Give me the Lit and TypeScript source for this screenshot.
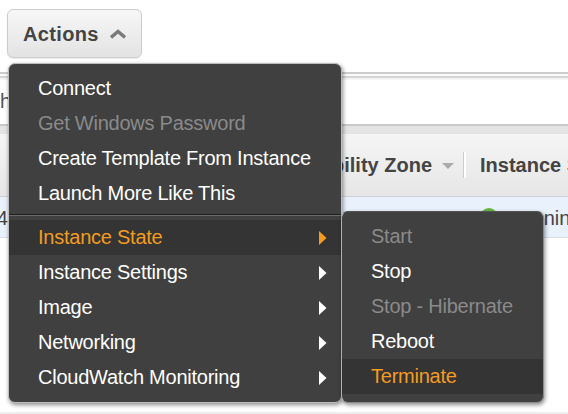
import { LitElement, html, css, svg } from "lit";
import { customElement } from "lit/decorators.js";

const main = [
  { t: "Connect" },
  { t: "Get Windows Password", d: true },
  { t: "Create Template From Instance" },
  { t: "Launch More Like This" },
];
const sub = [
  { t: "Instance State", a: true },
  { t: "Instance Settings" },
  { t: "Image" },
  { t: "Networking" },
  { t: "CloudWatch Monitoring" },
];
const state = [
  { t: "Start", d: true },
  { t: "Stop" },
  { t: "Stop - Hibernate", d: true },
  { t: "Reboot" },
  { t: "Terminate", a: true },
];

@customElement("app-root")
export class AppRoot extends LitElement {
  static styles = css`
    :host { display: block; width: 568px; height: 414px; position: relative; overflow: hidden; background: #fff;
      font-family: "Liberation Sans", Arial, sans-serif; color: #444; }
    .top { height: 72px; padding: 9px 0 0 7px; box-sizing: border-box; }
    .btn { width: 135px; height: 49px; box-sizing: border-box; border: 1px solid #ccc; border-radius: 6px;
      background: linear-gradient(#f7f7f7, #e3e3e3); display: flex; align-items: center; padding: 1px 0 0 15px; gap: 11px;
      font-weight: 700; font-size: 20px; color: #444; letter-spacing: .35px; box-shadow: 0 1px 1px rgba(0,0,0,.08); }
    .bar1 { height: 8px; background: linear-gradient(#ccc 0 2px, #fafafa 2px 4px, #d4d4d4 4px 6px, #f4f4f4 6px); }
    .search { height: 44px; background: #fff; font-size: 20px; color: #555; line-height: 42px; overflow: hidden; }
    .bar2 { height: 10px; background: linear-gradient(#c9c9c9 0 2px, #e4e4e4 2px 100%); }
    .head { height: 63px; box-sizing: border-box; background: linear-gradient(#f5f5f5, #e6e6e6); border-bottom: 1px solid #ccd0d6;
      display: flex; align-items: center; padding-left: 332px; font-weight: 700; font-size: 20px; color: #444; white-space: nowrap; overflow: hidden; }
    .sort { margin: 2px 9px 0 10px; width: 0; height: 0; border: 6px solid transparent; border-top: 6px solid #aaa; border-bottom: 0; flex: none; }
    .div { width: 2px; height: 26px; background: #fff; border-left: 1px solid #ccc; margin-right: 14px; flex: none; }
    .row { height: 41px; box-sizing: border-box; background: #e9f2fc; border-bottom: 1px solid #d5dfe9; position: relative;
      font-size: 20px; color: #444; overflow: hidden; white-space: nowrap; }
    .id { position: absolute; right: 560px; top: 10px; }
    .az { position: absolute; left: 349px; top: 10px; }
    .status { position: absolute; left: 507px; top: 10px; }
    .dot { position: absolute; left: 480px; top: 11px; width: 18px; height: 18px; border-radius: 50%; background: #67b63f; }
    .foot { position: absolute; left: 0; right: 0; bottom: 0; height: 2px; background: #eee; }

    .menu { position: absolute; box-sizing: border-box; background: #404040; border: 1px solid #bdbdbd; border-radius: 7px;
      box-shadow: 1px 2px 4px rgba(0,0,0,.45); color: #fff; font-size: 20px; letter-spacing: -.24px; }
    .m1 { left: 8px; top: 63px; width: 334px; height: 340px; padding-top: 7px; }
    .m2 { left: 341px; top: 211px; width: 203px; height: 192px; padding-top: 7px; border-color: #8a8a8a; border-top-color: #555; border-left-color: #b0b0b0; }
    .item { height: 35px; display: flex; align-items: center; padding-left: 29px; white-space: nowrap; position: relative; }
    .d { color: #8a8a8a; }
    .a { color: #f39c1f; background: #343434; }
    .sep { height: 7px; margin-top: 2px; background: linear-gradient(#404040 0 1px, #1e1e1e 1px 2px, #6a6a6a 2px 3px, #404040 3px); box-sizing: border-box; }
    .arr { position: absolute; right: 14px; top: 11px; width: 8px; height: 14px; fill: #fff; }
    .a .arr { fill: #f39c1f; }
    svg { display: block; }
  `;

  render() {
    const arrow = svg`<path d="M0 0L7.5 7L0 14Z"/>`;
    return html`
      <div class="top">
        <div class="btn">Actions
          <svg width="16" height="10" viewBox="0 0 16 10"><path d="M1 8.5L8 2.5L15 8.5" fill="none" stroke="#7a7a7a" stroke-width="3.4"/></svg>
        </div>
      </div>
      <div class="bar1"></div>
      <div class="search">h</div>
      <div class="bar2"></div>
      <div class="head">bility Zone<span class="sort"></span><span class="div"></span>Instance State</div>
      <div class="row"><span class="id">i-04</span><span class="az">t</span><span class="dot"></span><span class="status">Running</span></div>
      <div class="foot"></div>
      <div class="menu m1">
        ${main.map((i) => html`<div class="item ${i.d ? "d" : ""}">${i.t}</div>`)}
        <div class="sep"></div>
        ${sub.map((i) => html`<div class="item ${i.a ? "a" : ""}">${i.t}
          <svg class="arr" viewBox="0 0 8 14">${arrow}</svg></div>`)}
      </div>
      <div class="menu m2">
        ${state.map((i) => html`<div class="item ${i.d ? "d" : ""} ${i.a ? "a" : ""}">${i.t}</div>`)}
      </div>
    `;
  }
}
